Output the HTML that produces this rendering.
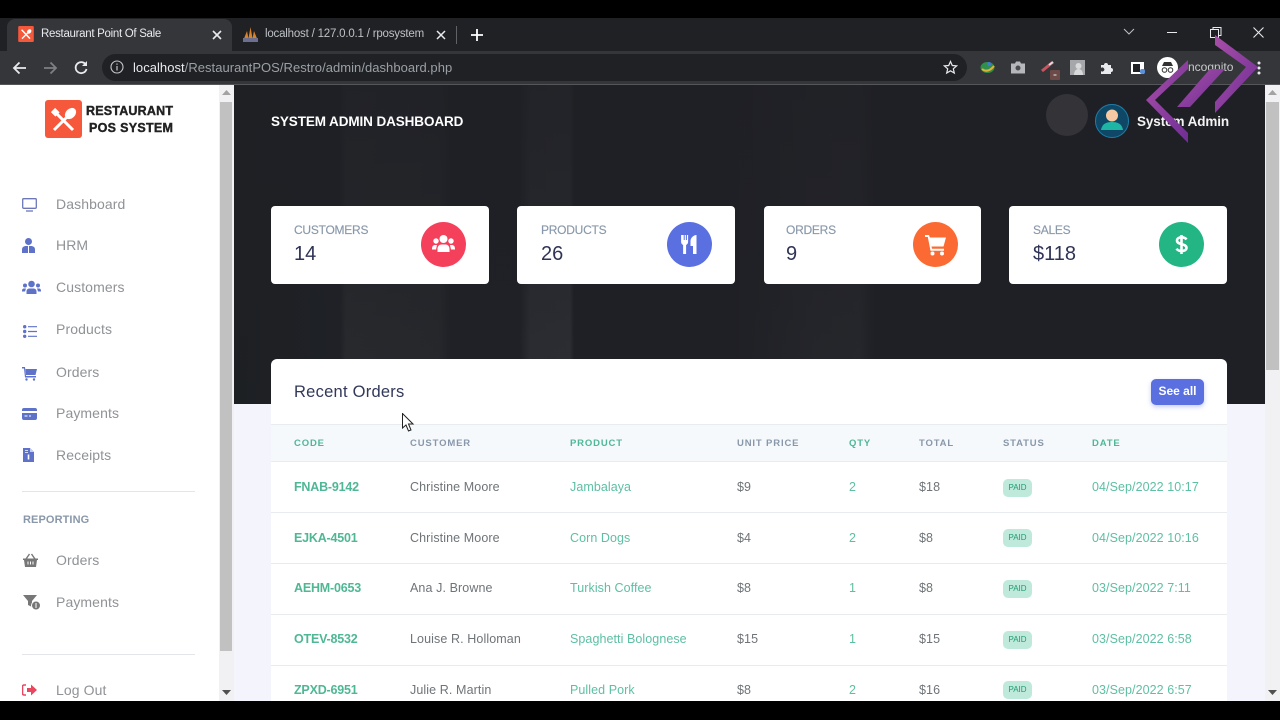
<!DOCTYPE html>
<html><head><meta charset="utf-8"><title>Restaurant Point Of Sale</title>
<style>
*{box-sizing:border-box}
html,body{margin:0;padding:0;width:1280px;height:720px;overflow:hidden;background:#000;font-family:"Liberation Sans",sans-serif}
.a{position:absolute;white-space:nowrap}
.n{position:absolute;left:56px;font-size:14px;color:#8f9296;letter-spacing:.1px;line-height:18px;white-space:nowrap}
.c{position:absolute;top:206px;height:78px;background:#fff;border-radius:4px}
.cl{position:absolute;left:24px;top:16px;font-size:12px;color:#8898aa;letter-spacing:-.25px;line-height:16px;-webkit-text-stroke:.15px #8898aa}
.cv{position:absolute;left:24px;top:37px;font-size:20px;color:#2f3356;line-height:23px}
.ci{position:absolute;right:23px;top:16px;width:45px;height:45px;border-radius:50%}
.ci svg{position:absolute;left:0;top:0}
.th{position:absolute;top:438px;font-size:9.5px;font-weight:bold;letter-spacing:.85px;line-height:12px;color:#8898aa;white-space:nowrap}
.g{color:#4fb795}
.td{position:absolute;font-size:12.5px;line-height:16px;color:#6f7478;white-space:nowrap;letter-spacing:.1px}
.t{color:#5dbfa3;letter-spacing:.07px}
.b{font-weight:bold;color:#4fb795;letter-spacing:-.2px}
.p{position:absolute;left:1003px;width:29px;height:18px;border-radius:5px;background:#bfeadb;color:#1f9a72;font-size:8px;text-align:center;line-height:18px}
.l{position:absolute;left:271px;width:956px;height:1px;background:#e9ecef}
</style></head><body>
<!-- chrome -->
<div class="a" style="left:0;top:18px;width:1280px;height:33px;background:#202124"></div>
<div class="a" style="left:7px;top:19px;height:32px;background:#35363a;border-radius:8px 8px 0 0;width:225px"></div>
<div class="a" style="left:0;top:51px;width:1280px;height:34px;background:#35363a"></div>
<div class="a" style="left:0;top:84px;width:1280px;height:1px;background:#55565a"></div>
<svg class="a" style="left:18px;top:26px" width="16" height="16" viewBox="0 0 37 38"><rect width="37" height="38" rx="3" fill="#f5583a"/><path d="M8 9l20 21" stroke="#fff" stroke-width="3.500"/><path d="M9 30l14-14" stroke="#fff" stroke-width="3.500"/><ellipse cx="26" cy="13" rx="4.500" ry="6" transform="rotate(45 26 13)" fill="#fff"/></svg>
<div class="a" style="left:41px;top:27px;font-size:11.5px;line-height:15px;color:#e8eaed;letter-spacing:-.3px">Restaurant Point Of Sale</div>
<svg class="a" style="left:212px;top:30px" width="10" height="10"><path d="M1 1l8 8M9 1l-8 8" stroke="#e8eaed" stroke-width="1.6"/></svg>
<svg class="a" style="left:242px;top:27px" width="17" height="15" viewBox="0 0 17 15"><path d="M1 14L5 4l2 10zM6 14L8.500 0 11 14zM10 14l2-10 4 10z" fill="#d9822b"/><rect x="1" y="11" width="15" height="4" fill="#6d6f8f"/></svg>
<div class="a" style="left:265px;top:27px;width:161px;overflow:hidden;font-size:11.5px;line-height:15px;color:#bdc1c6;letter-spacing:-.2px">localhost / 127.0.0.1 / rposystem</div>
<svg class="a" style="left:436px;top:30px" width="10" height="10"><path d="M1 1l8 8M9 1l-8 8" stroke="#e8eaed" stroke-width="1.5"/></svg>
<div class="a" style="left:456px;top:26px;width:1px;height:18px;background:#5f6368"></div>
<svg class="a" style="left:471px;top:29px" width="12" height="12"><path d="M6 0v12M0 6h12" stroke="#fff" stroke-width="1.8"/></svg>
<svg class="a" style="left:1123px;top:28px" width="12" height="8"><path d="M1 1l5 5 5-5" fill="none" stroke="#bdc1c6"/></svg>
<div class="a" style="left:1167px;top:32px;width:10px;height:1px;background:#e8eaed"></div>
<svg class="a" style="left:1210px;top:27px" width="12" height="12"><path d="M3 2.500V.5h8v8H9M.5 2.500h8v8h-8z" fill="none" stroke="#e8eaed"/></svg>
<svg class="a" style="left:1253px;top:27px" width="11" height="11"><path d="M.5.500l10 10M10.500.500l-10 10" stroke="#e8eaed" stroke-width="1.100"/></svg>
<svg class="a" style="left:12px;top:60px" width="16" height="16"><path d="M14 8H2M7.500 2.500L2 8l5.500 5.500" fill="none" stroke="#e8eaed" stroke-width="1.800"/></svg>
<svg class="a" style="left:42px;top:60px" width="16" height="16"><path d="M2 8h12M8.500 2.500L14 8l-5.500 5.500" fill="none" stroke="#7d8084" stroke-width="1.800"/></svg>
<svg class="a" style="left:73px;top:60px" width="16" height="16"><path d="M13 5A5.500 5.500 0 1 0 13.500 9" fill="none" stroke="#e8eaed" stroke-width="1.800"/><path d="M14 1v5H9z" fill="#e8eaed"/></svg>
<div class="a" style="left:102px;top:54px;width:865px;height:27px;background:#202124;border-radius:14px"></div>
<svg class="a" style="left:110px;top:60px" width="14" height="14"><circle cx="7" cy="7" r="6" fill="none" stroke="#c4c7ca" stroke-width="1.100"/><path d="M7 6v4.500M7 3.500v1.300" stroke="#c4c7ca" stroke-width="1.200"/></svg>
<div class="a" style="left:133px;top:60px;font-size:13px;line-height:16px;color:#9aa0a6;letter-spacing:.04px"><span style="color:#e8eaed">localhost</span>/RestaurantPOS/Restro/admin/dashboard.php</div>
<svg class="a" style="left:943px;top:60px" width="15" height="15" viewBox="0 0 15 15"><path d="M7.500 1.500l1.800 4 4.300.4-3.300 2.900 1 4.200-3.800-2.200-3.800 2.200 1-4.200L1.400 5.900l4.300-.4z" fill="none" stroke="#e8eaed" stroke-width="1.200"/></svg>
<svg class="a" style="left:980px;top:61px" width="15" height="13"><ellipse cx="7.500" cy="6.500" rx="7" ry="5.500" fill="#2f8f4d"/><path d="M2 8c4 3 8 2 12-3" stroke="#e0b23c" stroke-width="2" fill="none"/><circle cx="9" cy="3" r="2" fill="#3f7ccf"/></svg>
<svg class="a" style="left:1011px;top:61px" width="14" height="13"><path d="M0 2.500h4L5 .5h4l1 2h4v10H0z" fill="#b5b7ba"/><circle cx="7" cy="7" r="2.500" fill="#4a4b4f"/></svg>
<svg class="a" style="left:1041px;top:60px" width="20" height="20"><path d="M1 11L12 2" stroke="#c8555f" stroke-width="3"/><path d="M8 5L12 2" stroke="#ddd" stroke-width="2"/><rect x="9" y="10" width="10" height="10" rx="1" fill="#6b4a47"/><path d="M12.500 15h3" stroke="#eee"/></svg>
<svg class="a" style="left:1070px;top:60px" width="15" height="15"><rect width="15" height="15" fill="#a5a7aa"/><circle cx="8.500" cy="6" r="3" fill="#d8d9da"/><path d="M4 15c0-4 2-6 4.500-6S13 11 13 15z" fill="#d8d9da"/></svg>
<svg class="a" style="left:1100px;top:60px" width="15" height="15" viewBox="0 0 15 15"><path d="M1 5h3a2 2 0 1 1 4 0h3v3a2 2 0 1 1 0 4v2H1v-3a2 2 0 1 0 0-3z" fill="#e8eaed"/></svg>
<div class="a" style="left:1131px;top:62px;width:13px;height:12px;background:#fff"></div>
<div class="a" style="left:1133px;top:64px;width:7px;height:8px;background:#202124"></div>
<div class="a" style="left:1140px;top:69px;width:5px;height:5px;background:#5b8fd6;border-radius:2px"></div>
<div class="a" style="left:1157px;top:57px;width:21px;height:21px;border-radius:50%;background:#fff"></div>
<svg class="a" style="left:1160px;top:61px" width="15" height="13"><path d="M2 5h11L11 1H4z" fill="#333"/><circle cx="4.500" cy="9" r="2.300" fill="none" stroke="#333"/><circle cx="10.500" cy="9" r="2.300" fill="none" stroke="#333"/></svg>
<div class="a" style="left:1188px;top:60px;font-size:12px;line-height:14px;color:#c8cacc">ncognito</div>
<svg class="a" style="left:1257px;top:61px" width="4" height="14"><circle cx="2" cy="2" r="1.500" fill="#e8eaed"/><circle cx="2" cy="7" r="1.500" fill="#e8eaed"/><circle cx="2" cy="12" r="1.500" fill="#e8eaed"/></svg>

<!-- sidebar -->
<div class="a" style="left:0;top:85px;width:234px;height:616px;background:#fff"></div>
<div class="a" style="left:219px;top:85px;width:15px;height:616px;background:#f1f1f3"></div>
<div class="a" style="left:220px;top:102px;width:12px;height:549px;background:#c1c1c1"></div>
<svg class="a" style="left:222px;top:90px" width="9" height="6"><path d="M0 5h9L4.500 0z" fill="#a3a3a3"/></svg>
<svg class="a" style="left:222px;top:690px" width="9" height="6"><path d="M0 0h9L4.500 5z" fill="#505050"/></svg>
<svg class="a" style="left:45px;top:100px" width="37" height="38" viewBox="0 0 37 38"><rect width="37" height="38" rx="3" fill="#f5583a"/><path d="M8 10l4.500 4.500" stroke="#fff" stroke-width="6"/><path d="M10 12l18 18" stroke="#fff" stroke-width="3"/><path d="M9 30l14-14" stroke="#fff" stroke-width="3"/><ellipse cx="25.500" cy="13.500" rx="4.800" ry="6.300" transform="rotate(45 25.500 13.500)" fill="#fff"/></svg>
<div class="a" style="left:86px;top:103px;font-size:12.5px;line-height:16px;font-weight:bold;color:#222;letter-spacing:.2px;-webkit-text-stroke:.4px #222">RESTAURANT</div>
<div class="a" style="left:89px;top:120px;font-size:12.5px;line-height:16px;font-weight:bold;color:#222;letter-spacing:.3px;-webkit-text-stroke:.4px #222">POS SYSTEM</div>

<svg class="a" style="left:22px;top:198px" width="15" height="14"><rect x=".7" y=".7" width="13.600" height="9.600" rx="1" fill="none" stroke="#6d77b8" stroke-width="1.300"/><path d="M4 13h7" stroke="#6d77b8" stroke-width="1.300"/></svg>
<svg class="a" style="left:22px;top:238px" width="13" height="15"><circle cx="6.500" cy="3.500" r="3.500" fill="#5e72c9"/><path d="M0 15v-3.500C0 9 2 8 4 8h5c2 0 4 1 4 3.500V15z" fill="#5e72c9"/><path d="M6.500 8v7" stroke="#fff"/></svg>
<svg class="a" style="left:22px;top:280px" width="19" height="15" viewBox="0 0 19 15"><circle cx="9.500" cy="4" r="3.300" fill="#5e72c9"/><circle cx="3" cy="5.500" r="2" fill="#5e72c9"/><circle cx="16" cy="5.500" r="2" fill="#5e72c9"/><path d="M4.500 14v-2.500C4.500 9.500 6 8.500 7.500 8.500h4c1.500 0 3 1 3 3V14zM0 11c0-2 1-2.500 2-2.500h2L3 11.500H0zM19 11c0-2-1-2.500-2-2.500h-2l1 3h3z" fill="#5e72c9"/></svg>
<svg class="a" style="left:23px;top:325px" width="14" height="13"><g fill="#5e72c9"><circle cx="1.700" cy="1.700" r="1.700"/><circle cx="1.700" cy="6.500" r="1.700"/><circle cx="1.700" cy="11.300" r="1.700"/></g><path d="M5 1.700h9M5 6.500h9M5 11.300h9" stroke="#5e72c9" stroke-width="1.200"/></svg>
<svg class="a" style="left:22px;top:366px" width="15" height="15"><path d="M0 1h3l1 9h10v1.500H3L2 2.500H0z" fill="#5e72c9"/><path d="M3.500 3H15l-1.500 6H4z" fill="#5e72c9"/><circle cx="4.500" cy="13.500" r="1.200" fill="#5e72c9"/><circle cx="12" cy="13.500" r="1.200" fill="#5e72c9"/></svg>
<svg class="a" style="left:22px;top:408px" width="15" height="12"><path d="M0 2a2 2 0 0 1 2-2h11a2 2 0 0 1 2 2v1H0zM0 5h15v5a2 2 0 0 1-2 2H2a2 2 0 0 1-2-2z" fill="#5e72c9"/><path d="M2.500 8h3M7 8h2" stroke="#fff"/></svg>
<svg class="a" style="left:23px;top:448px" width="11" height="14"><path d="M0 0h7l4 4v10H0z" fill="#5e72c9"/><path d="M7 0v4h4z" fill="#c5cdee"/><path d="M5.500 6.500v5" stroke="#fff" stroke-width="1.600"/><path d="M2 2.500h3M2 4.500h3" stroke="#fff" stroke-width=".7"/></svg>
<div class="n" style="top:195px">Dashboard</div>
<div class="n" style="top:236px">HRM</div>
<div class="n" style="top:278px">Customers</div>
<div class="n" style="top:320px">Products</div>
<div class="n" style="top:363px">Orders</div>
<div class="n" style="top:404px">Payments</div>
<div class="n" style="top:446px">Receipts</div>
<div class="a" style="left:22px;top:491px;width:173px;height:1px;background:#e3e5e8"></div>
<div class="a" style="left:23px;top:513px;font-size:11px;font-weight:bold;line-height:14px;color:#8898aa;letter-spacing:.1px">REPORTING</div>
<svg class="a" style="left:23px;top:553px" width="15" height="14"><path d="M0 5.500h15v1.500h-1L13 14H2L1 7H0z" fill="#777"/><path d="M3 6l3.500-5M12 6L8.500 1" stroke="#777" stroke-width="1.400"/><path d="M5 8.500v3M7.500 8.500v3M10 8.500v3" stroke="#fff"/></svg>
<svg class="a" style="left:23px;top:595px" width="18" height="15"><path d="M0 0h14L9 6v6L5 10V6z" fill="#777"/><circle cx="13" cy="10.500" r="4.500" fill="#777" stroke="#fff"/><path d="M13 8v5" stroke="#fff"/></svg>
<div class="n" style="top:551px">Orders</div>
<div class="n" style="top:593px">Payments</div>
<div class="a" style="left:22px;top:654px;width:173px;height:1px;background:#e3e5e8"></div>
<svg class="a" style="left:22px;top:684px" width="15" height="12"><path d="M4 1H2a1.500 1.500 0 0 0-1.500 1.500v7A1.500 1.500 0 0 0 2 11h2" fill="none" stroke="#e8475f" stroke-width="1.600"/><path d="M5 4h4V.5L15 6l-6 5.500V8H5z" fill="#e8475f"/></svg>
<div class="n" style="top:681px">Log Out</div>

<!-- main -->
<div class="a" style="left:234px;top:85px;width:1031px;height:616px;background:#f4f5fc"></div>
<div class="a" style="left:234px;top:85px;width:1031px;height:319px;background:linear-gradient(90deg,#1d2023 0,#1f2126 106px,#282a2e 112px,#26282c 205px,#1f2126 216px,#1f2126 286px,#2b2d33 296px,#2c2e34 336px,#1f2025 340px,#1f2025 500px,#25262b 580px,#26272c 625px,#1f2025 640px)"></div>
<div class="a" style="left:234px;top:85px;width:1031px;height:319px;background:linear-gradient(180deg,rgba(31,32,37,.75) 0,rgba(31,32,37,.55) 40%,rgba(31,32,37,.1) 80%,rgba(31,32,37,0) 100%)"></div>
<div class="a" style="left:271px;top:114px;font-size:13.5px;font-weight:bold;line-height:16px;color:#fff;letter-spacing:-.1px">SYSTEM ADMIN DASHBOARD</div>
<div class="a" style="left:1046px;top:94px;width:42px;height:42px;border-radius:50%;background:#333338"></div>
<svg class="a" style="left:1095px;top:104px" width="34" height="34" viewBox="0 0 34 34"><circle cx="17" cy="17" r="17" fill="#0f4767"/><circle cx="17" cy="17" r="16.500" fill="none" stroke="#1f7ea5"/><circle cx="17" cy="11.500" r="6" fill="#f6c9a3"/><path d="M6 26c1-6 5-8 11-8s10 2 11 8z" fill="#1fb5a5"/></svg>
<div class="a" style="left:1137px;top:114px;font-size:13.5px;font-weight:bold;line-height:16px;color:#f3f3f3;letter-spacing:-.1px">System Admin</div>

<div class="c" style="left:271px;width:218px"><div class="cl" style="left:23px">CUSTOMERS</div><div class="cv" style="left:23px">14</div><div class="ci" style="background:#f5405c;right:23px"><svg width="45" height="45" viewBox="0 0 45 45"><g fill="#fff"><circle cx="22.500" cy="17" r="4"/><circle cx="15" cy="19" r="2.700"/><circle cx="30" cy="19" r="2.700"/><path d="M16.500 30v-3c0-3 2-4.500 4-4.500h4c2 0 4 1.500 4 4.500v3zM11 27c0-3 1.500-4 3-4h2l-1 4.500h-4zM34 27c0-3-1.500-4-3-4h-2l1 4.500h4z"/></g></svg></div></div>
<div class="c" style="left:517px;width:218px"><div class="cl">PRODUCTS</div><div class="cv">26</div><div class="ci" style="background:#5a6fe0"><svg width="45" height="45" viewBox="0 0 45 45"><g fill="#fff"><path d="M14.500 13h1.200v5h1V13h1.200v5h1V13h1.200v7c0 1.500-1 2.500-2 3v9h-3v-9c-1-.5-2-1.500-2-3v-7z" transform="translate(1 0)"/><path d="M29.500 13v19h-3.500v-8h-2.500v-5c0-3 3-6 6-6z"/></g></svg></div></div>
<div class="c" style="left:764px;width:217px"><div class="cl" style="left:22px">ORDERS</div><div class="cv" style="left:22px">9</div><div class="ci" style="background:#fb6a33"><svg width="45" height="45" viewBox="0 0 45 45"><g fill="#fff"><path d="M12 13h4l.8 2.500H33l-2.500 9H18.500l.5 2.300H31v2H17.500L14.800 15H12z"/><circle cx="19.500" cy="31.500" r="2"/><circle cx="29" cy="31.500" r="2"/></g></svg></div></div>
<div class="c" style="left:1009px;width:218px"><div class="cl">SALES</div><div class="cv">$118</div><div class="ci" style="background:#23b583"><svg width="45" height="45" viewBox="0 0 45 45"><path d="M27.500 17.500c-1-1.500-3-2.200-5-2.200-2.500 0-4.500 1.200-4.500 3.300 0 4.500 9.500 2.500 9.500 7.200 0 2.200-2.200 3.200-5 3.200-2 0-4-.8-5-2.300M22.500 13v19" fill="none" stroke="#fff" stroke-width="2.600"/></svg></div></div>

<div class="a" style="left:271px;top:359px;width:956px;height:342px;background:#fff;border-radius:6px 6px 0 0"></div>
<div class="a" style="left:294px;top:383px;font-size:16.5px;line-height:18px;color:#32385a;letter-spacing:.25px">Recent Orders</div>
<div class="a" style="left:1151px;top:379px;width:53px;height:26px;border-radius:5px;background:#5a6fe0;box-shadow:0 2px 5px rgba(90,111,224,.35);color:#fff;font-size:12px;font-weight:bold;text-align:center;line-height:25px">See all</div>
<div class="a" style="left:271px;top:424px;width:956px;height:38px;background:#f6f9fc;border-top:1px solid #e9ecef;border-bottom:1px solid #e9ecef"></div>
<svg class="a" style="left:402px;top:413px" width="12" height="19" viewBox="0 0 12 19"><path d="M.5.500v14.500l3.500-3 2.500 6 2.500-1-2.500-6h4.500z" fill="#fff" stroke="#222"/></svg>
<div class="th g" style="left:294px">CODE</div><div class="th" style="left:410px">CUSTOMER</div><div class="th g" style="left:570px">PRODUCT</div><div class="th" style="left:737px">UNIT PRICE</div><div class="th g" style="left:849px">QTY</div><div class="th" style="left:919px">TOTAL</div><div class="th" style="left:1003px">STATUS</div><div class="th g" style="left:1092px">DATE</div>

<div class="l" style="top:512px"></div><div class="l" style="top:563px"></div><div class="l" style="top:614px"></div><div class="l" style="top:665px"></div>

<div class="td b" style="left:294px;top:479px">FNAB-9142</div><div class="td" style="left:410px;top:479px">Christine Moore</div><div class="td t" style="left:570px;top:479px">Jambalaya</div><div class="td" style="left:737px;top:479px">$9</div><div class="td t" style="left:849px;top:479px">2</div><div class="td" style="left:919px;top:479px">$18</div><div class="p" style="top:479px">PAID</div><div class="td t" style="left:1092px;top:479px">04/Sep/2022 10:17</div>
<div class="td b" style="left:294px;top:530px">EJKA-4501</div><div class="td" style="left:410px;top:530px">Christine Moore</div><div class="td t" style="left:570px;top:530px">Corn Dogs</div><div class="td" style="left:737px;top:530px">$4</div><div class="td t" style="left:849px;top:530px">2</div><div class="td" style="left:919px;top:530px">$8</div><div class="p" style="top:529px">PAID</div><div class="td t" style="left:1092px;top:530px">04/Sep/2022 10:16</div>
<div class="td b" style="left:294px;top:580px">AEHM-0653</div><div class="td" style="left:410px;top:580px">Ana J. Browne</div><div class="td t" style="left:570px;top:580px">Turkish Coffee</div><div class="td" style="left:737px;top:580px">$8</div><div class="td t" style="left:849px;top:580px">1</div><div class="td" style="left:919px;top:580px">$8</div><div class="p" style="top:580px">PAID</div><div class="td t" style="left:1092px;top:580px">03/Sep/2022 7:11</div>
<div class="td b" style="left:294px;top:631px">OTEV-8532</div><div class="td" style="left:410px;top:631px">Louise R. Holloman</div><div class="td t" style="left:570px;top:631px">Spaghetti Bolognese</div><div class="td" style="left:737px;top:631px">$15</div><div class="td t" style="left:849px;top:631px">1</div><div class="td" style="left:919px;top:631px">$15</div><div class="p" style="top:631px">PAID</div><div class="td t" style="left:1092px;top:631px">03/Sep/2022 6:58</div>
<div class="td b" style="left:294px;top:682px">ZPXD-6951</div><div class="td" style="left:410px;top:682px">Julie R. Martin</div><div class="td t" style="left:570px;top:682px">Pulled Pork</div><div class="td" style="left:737px;top:682px">$8</div><div class="td t" style="left:849px;top:682px">2</div><div class="td" style="left:919px;top:682px">$16</div><div class="p" style="top:681px">PAID</div><div class="td t" style="left:1092px;top:682px">03/Sep/2022 6:57</div>

<!-- page scrollbar -->
<div class="a" style="left:1265px;top:85px;width:15px;height:616px;background:#f1f1f3"></div>
<div class="a" style="left:1266px;top:102px;width:13px;height:268px;background:#c1c1c1"></div>
<svg class="a" style="left:1268px;top:90px" width="9" height="6"><path d="M0 5h9L4.500 0z" fill="#a3a3a3"/></svg>
<svg class="a" style="left:1268px;top:690px" width="9" height="6"><path d="M0 0h9L4.500 5z" fill="#505050"/></svg>

<!-- watermark logo -->
<svg class="a" style="left:1140px;top:28px" width="125" height="120" viewBox="1140 28 125 120"><defs><linearGradient id="w" x1="0" y1="0" x2="1" y2="1"><stop offset="0" stop-color="#a84fa8"/><stop offset="1" stop-color="#6e2e94"/></linearGradient></defs><g fill="url(#w)"><path d="M1215 35l43 32-43 46v-11l31-35-31-22z"/><path d="M1188 60v9l-33 31 33 33v10l-42-43z"/><path d="M1177 107l33-38h15l-35 38z"/></g></svg>

<div class="a" style="left:0;top:701px;width:1280px;height:19px;background:#000"></div>
</body></html>
